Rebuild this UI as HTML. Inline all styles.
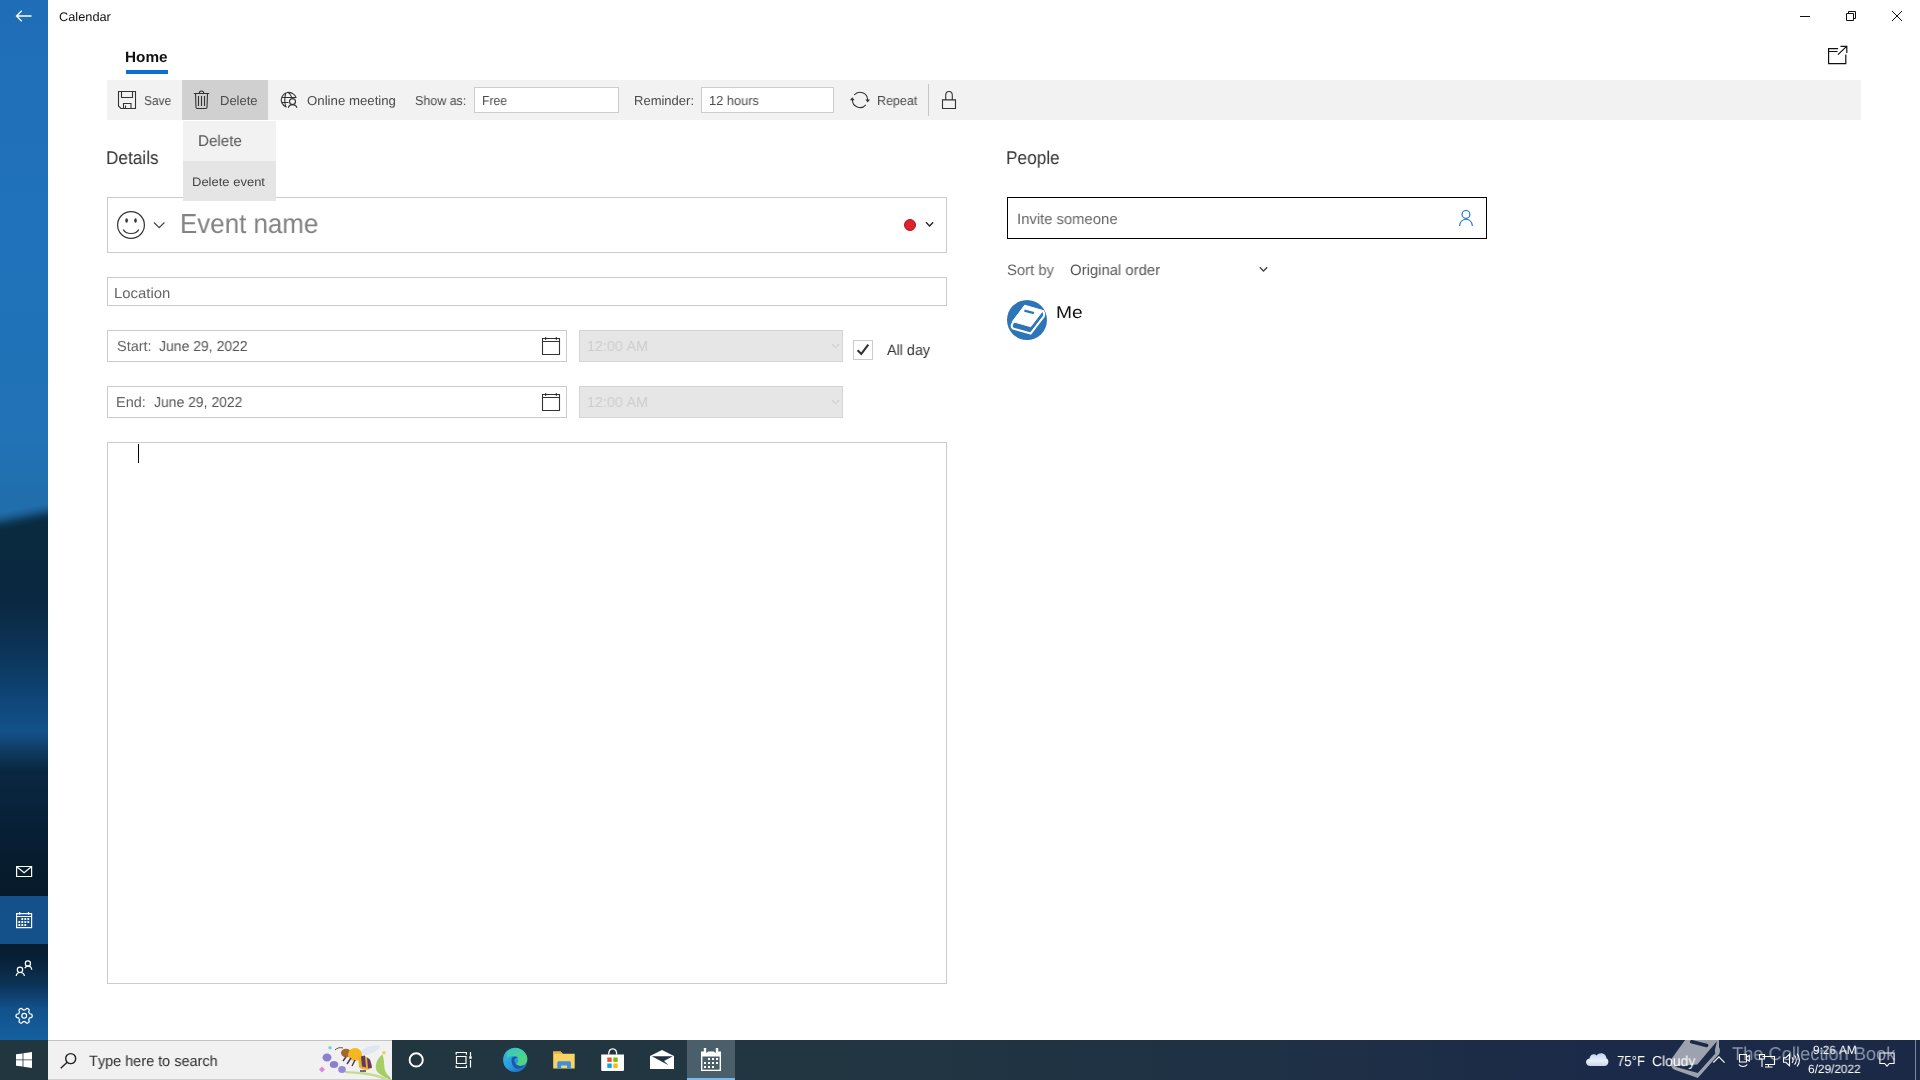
<!DOCTYPE html>
<html lang="en">
<head>
<meta charset="utf-8">
<title>Calendar</title>
<style>
*{box-sizing:border-box;margin:0;padding:0}
html,body{width:1920px;height:1080px;overflow:hidden;background:#fff}
body{position:relative;font-family:"Liberation Sans",sans-serif;color:#333}
.abs{position:absolute}
.t{position:absolute;white-space:nowrap;line-height:1;transform-origin:0 0;will-change:transform;text-rendering:geometricPrecision;font-kerning:none}
svg{position:absolute;overflow:visible}
#side{position:absolute;left:0;top:0;width:48px;height:1040px;
 background:linear-gradient(to bottom,#1f6db7 0px,#2073ba 250px,#2172b6 440px,#206eac 494px,#206eac 500px,#0a2a40 540px,#0a2a40 546px,#0a2840 600px,#0c3457 650px,#0e4272 690px,#13528a 732px,#0d3a60 752px,#09283f 770px,#08223a 810px,#071c2e 860px,#061a2a 900px,#061b2c 944px,#08223a 962px,#0c3356 985px,#12508a 1008px,#1560a0 1040px)}
#side .sel{position:absolute;left:0;top:896px;width:48px;height:48px;background:#14508a}
#tb{position:absolute;left:107px;top:80px;width:1754px;height:40px;background:#f2f2f2}
#delbtn{position:absolute;left:182px;top:80px;width:86px;height:40px;background:#d0d0d0}
.inp{position:absolute;background:#fff;border:1px solid #cdcdcd}
.box{position:absolute;background:#fff;border:1px solid #cbcbcb}
.dis{position:absolute;background:#e6e6e6;border:1px solid #d4d4d4}
#task{position:absolute;left:0;top:1040px;width:1920px;height:40px;background:linear-gradient(to right,#22363f 0,#213641 800px,#1f3145 1250px,#1b2a48 1600px,#1b2947 1920px)}
#search{position:absolute;left:48px;top:1040px;width:344px;height:40px;background:#f1f1f1;border-top:1px solid #c4c4c4;border-bottom:1px solid #cfcfcf}
</style>
</head>
<body>
<!-- SIDEBAR -->
<div id="side"><div class="sel"></div></div>

<!-- HOME TAB UNDERLINE -->
<div class="abs" style="left:126px;top:70px;width:42px;height:4px;background:#0b70d4"></div>

<!-- TOOLBAR -->
<div id="tb"></div>
<div id="delbtn"></div>
<div class="inp" style="left:474px;top:87px;width:145px;height:26px"></div>
<div class="inp" style="left:701px;top:87px;width:133px;height:26px"></div>
<div class="abs" style="left:928px;top:84px;width:1px;height:32px;background:#c6c6c6"></div>

<!-- DETAILS FORM -->
<div class="box" style="left:107px;top:197px;width:840px;height:56px"></div>
<div class="box" style="left:107px;top:277px;width:840px;height:29px"></div>
<div class="box" style="left:107px;top:330px;width:460px;height:32px"></div>
<div class="dis" style="left:579px;top:330px;width:264px;height:32px"></div>
<div class="box" style="left:853px;top:340px;width:20px;height:20px"></div>
<div class="box" style="left:107px;top:386px;width:460px;height:32px"></div>
<div class="dis" style="left:579px;top:386px;width:264px;height:32px"></div>
<div class="box" style="left:107px;top:442px;width:840px;height:542px"></div>
<div class="abs" style="left:138px;top:444px;width:1px;height:19px;background:#000"></div>

<!-- DROPDOWN -->
<div class="abs" style="left:183px;top:121px;width:93px;height:40px;background:#f2f2f2"></div>
<div class="abs" style="left:183px;top:161px;width:93px;height:40px;background:#e5e5e5"></div>

<!-- PEOPLE -->
<div class="abs" style="left:1007px;top:197px;width:480px;height:42px;border:1px solid #000;background:#fff"></div>

<!-- TASKBAR -->
<div id="task"></div>
<div id="search"></div>

<svg width="1920" height="1080" viewBox="0 0 1920 1080" style="left:0;top:0" fill="none" stroke-linecap="butt">
<!-- back arrow -->
<g stroke="#fff" stroke-width="1.3">
<path d="M16.5 16H31.5M21.7 10.8L16.5 16l5.2 5.2"/>
</g>
<!-- window controls -->
<g stroke="#111" stroke-width="1">
<path d="M1800 16.5h10"/>
<path d="M1846.5 13.5h7v7h-7zM1848.5 13.5v-2h7v7h-2"/>
<path d="M1892 11l10 10M1902 11l-10 10"/>
</g>
<!-- pop out -->
<g stroke="#111" stroke-width="1.2">
<path d="M1838 48.6h-9.4v15h17.2v-9.2M1828.6 51.5h9M1838 54.6l8.6-8.2M1840.5 46.4h6.3v6.6"/>
</g>
<!-- toolbar icons -->
<g stroke="#333" stroke-width="1.1">
<!-- save -->
<path d="M118.5 91.5h17v17h-14.5l-2.500-2.500zM121.500 91.500v6h11v-6M123.500 108.500v-5h7.500v5M125.500 105.500v3"/>
<!-- trash -->
<path d="M193.800 93.500h15.400M199.300 93.300c0-3 4.400-3 4.400 0M195.500 93.600l0.500 13.700c0 .8.500 1.200 1.300 1.200h8.400c.8 0 1.300-.4 1.300-1.200l.5-13.700M198.500 96v10M201.500 96v10M204.500 96v10"/>
<!-- globe + person -->
<path d="M293.500 94.100A7.500 7.500 0 1 0 286.600 107.100M296.200 98A7.500 7.500 0 0 0 293.500 94.100M281.900 97.500h14M281.800 102.500h6.800M285.800 93c-1.300 4.500-1.300 9.500 0 14M288.500 92.600c1.200 1 2.500 2.800 3.300 4.800"/>
<circle cx="292.500" cy="101.600" r="3"/>
<path d="M288.300 107.800c1-4.200 7.400-4.200 8.600 0"/>
<!-- repeat -->
<path d="M854.200 95A7.600 7.600 0 0 1 867.600 100M865.800 104.800A7.600 7.600 0 0 1 852.400 99.800"/>
<path d="M867.700 102.500l-2.300-3h4.600zM852.300 97.300l-2.300 3h4.600z" fill="#333" stroke="none"/>
<!-- lock -->
<path d="M942.500 99.900h13v8.600h-13zM945.700 99.900v-4.500c0-5.200 6.600-5.200 6.600 0v4.500"/>
</g>
<!-- smiley -->
<g stroke="#333" stroke-width="1.2">
<circle cx="131" cy="225" r="13.400"/>
<path d="M123.300 229.500c2.500 5.300 12.900 5.300 15.400 0"/>
</g>
<ellipse cx="126.600" cy="220.500" rx="1.300" ry="2.300" fill="#333"/>
<ellipse cx="135.500" cy="220.500" rx="1.300" ry="2.300" fill="#333"/>
<path d="M154 222.500l5.200 5.200 5.200-5.200" stroke="#444" stroke-width="1.2"/>
<!-- red dot -->
<circle cx="910" cy="225" r="5.500" fill="#e0222f" stroke="#9c1c26" stroke-width="1"/>
<path d="M926 222.300l3.600 3.700 3.600-3.700" stroke="#222" stroke-width="1.3"/>
<!-- calendar icons -->
<g stroke="#333" stroke-width="1.1">
<path d="M542.500 338.500h17v16h-17zM542.500 341.500h17M545.700 337v3M556.300 337v3"/>
<path d="M542.500 394.500h17v16h-17zM542.500 397.500h17M545.700 393v3M556.300 393v3"/>
</g>
<!-- time chevrons -->
<g stroke="#d2d2d2" stroke-width="1.2">
<path d="M832 344l3.600 3.700 3.600-3.700"/>
<path d="M832 400l3.600 3.700 3.600-3.700"/>
</g>
<!-- check -->
<path d="M857.600 350.300l3.700 3.700 7-9.300" stroke="#333" stroke-width="2.1"/>
<!-- invite person -->
<g stroke="#1e73c4" stroke-width="1.2">
<circle cx="1466" cy="214.400" r="3.900"/>
<path d="M1459.600 226c.8-9 12-9 12.800 0"/>
</g>
<!-- sort chevron -->
<path d="M1259.800 267.200l3.700 3.800 3.700-3.800" stroke="#444" stroke-width="1.4"/>
<!-- avatar -->
<circle cx="1027" cy="320" r="20" fill="#2e75b8"/>
<path d="M1024.700 305.200l18.300 5.300-12.300 16.200-18.300-5.200z" fill="#fff" stroke="#fff" stroke-width="1" stroke-linejoin="round"/>
<path d="M1024.400 310.600l9.600 2.600" stroke="#2e75b8" stroke-width="2.300"/>
<path d="M1013.200 322.400c-2 2-2 4.600-.2 6.200l17.600 5 13.200-17.200c.6-1.600.4-3.800-.8-5.400" stroke="#fff" stroke-width="2.100" stroke-linejoin="round" stroke-linecap="round"/>
</svg>


<svg width="1920" height="1080" viewBox="0 0 1920 1080" style="left:0;top:0" fill="none">
<defs><linearGradient id="sdg" gradientUnits="userSpaceOnUse" x1="0" y1="513" x2="3.300" y2="529.500"><stop offset="0" stop-color="#206eac"/><stop offset=".3" stop-color="#1b5d92"/><stop offset=".7" stop-color="#0e3858"/><stop offset="1" stop-color="#0a2a40"/></linearGradient></defs>
<rect x="0" y="494" width="48" height="52" fill="url(#sdg)"/>
<!-- sidebar icons -->
<g stroke="#fff" stroke-width="1.2">
<path d="M16.600 866.500h15v10h-15zM16.800 866.700l7.300 6 7.300-6"/>
<path d="M16.600 913.600h15v14h-15zM16.600 916.500h15M19.700 912v2.800M28.500 912v2.800"/>
<circle cx="27.900" cy="963.500" r="2.600"/>
<path d="M24.700 968.200c.8-1.400 2-2.100 3.200-2.100 2 0 3.700 1.500 3.900 3.700"/>
<circle cx="20" cy="969.800" r="2.700"/>
<path d="M16.200 976c.4-4.700 7.700-4.700 8.200 0"/>
<path d="M32.17 1015.80 L32.14 1016.33 L32.03 1016.84 L31.69 1017.31 L30.81 1017.60 L29.93 1017.78 L29.55 1018.06 L29.34 1018.38 L29.15 1018.71 L28.95 1019.04 L28.78 1019.39 L28.73 1019.86 L29.01 1020.71 L29.20 1021.62 L28.97 1022.15 L28.58 1022.50 L28.14 1022.79 L27.67 1023.03 L27.16 1023.19 L26.59 1023.13 L25.90 1022.51 L25.30 1021.84 L24.87 1021.65 L24.48 1021.63 L24.10 1021.63 L23.72 1021.63 L23.33 1021.65 L22.90 1021.84 L22.30 1022.51 L21.61 1023.13 L21.04 1023.19 L20.53 1023.03 L20.06 1022.79 L19.62 1022.50 L19.23 1022.15 L19.00 1021.62 L19.19 1020.71 L19.47 1019.86 L19.42 1019.39 L19.25 1019.04 L19.05 1018.71 L18.86 1018.38 L18.65 1018.06 L18.27 1017.78 L17.39 1017.60 L16.51 1017.31 L16.17 1016.84 L16.06 1016.33 L16.03 1015.80 L16.06 1015.27 L16.17 1014.76 L16.51 1014.29 L17.39 1014.00 L18.27 1013.82 L18.65 1013.54 L18.86 1013.22 L19.05 1012.89 L19.25 1012.56 L19.42 1012.21 L19.47 1011.74 L19.19 1010.89 L19.00 1009.98 L19.23 1009.45 L19.62 1009.10 L20.06 1008.81 L20.53 1008.57 L21.04 1008.41 L21.61 1008.47 L22.30 1009.09 L22.90 1009.76 L23.33 1009.95 L23.72 1009.97 L24.10 1009.97 L24.48 1009.97 L24.87 1009.95 L25.30 1009.76 L25.90 1009.09 L26.59 1008.47 L27.16 1008.41 L27.67 1008.57 L28.14 1008.81 L28.58 1009.10 L28.97 1009.45 L29.20 1009.98 L29.01 1010.89 L28.73 1011.74 L28.78 1012.21 L28.95 1012.56 L29.15 1012.89 L29.34 1013.22 L29.55 1013.54 L29.93 1013.82 L30.81 1014.00 L31.69 1014.29 L32.03 1014.76 L32.14 1015.27Z" stroke-linejoin="round" stroke-width="1.25"/>
<circle cx="24.200" cy="1015.800" r="2.400"/>
</g>
<g fill="#fff">
<path d="M21.4 918h1.800v2h-1.800zM24.4 918h1.800v2h-1.800zM27.4 918h1.800v2h-1.800zM18.4 921h1.800v2h-1.800zM21.4 921h1.800v2h-1.800zM24.4 921h1.800v2h-1.800zM27.4 921h1.800v2h-1.800zM18.4 924h1.800v2h-1.800zM21.4 924h1.800v2h-1.800zM24.4 924h1.800v2h-1.800z"/>
</g>
<!-- windows logo -->
<g fill="#fff">
<path d="M16 1054.300l6.600-.9v6.100h-6.600zM23.400 1053.300l8.600-1.300v7.500h-8.600zM16 1060.300h6.600v6.300l-6.600-.9zM23.400 1060.300h8.600v7.700l-8.600-1.300z"/>
</g>
<!-- search icon -->
<g stroke="#222" stroke-width="1.400">
<circle cx="70.700" cy="1058.600" r="5"/>
<path d="M67.200 1062.200l-6.500 6"/>
</g>
<!-- bee doodle -->
<g>
<path d="M382.500 1054.500c-4.500 3-7.500 9-6.500 14.500 1 4 5.500 6 9 8.500l5.500 2.500v-2.500c-3-2.500-5.500-5-6-9.500-.5-4.500-.5-9.500-2-13.500z" fill="#a5cf63"/>
<path d="M345 1070.800c13 1.200 30 1 42 8.200l-3 .8c-11-5.200-26-5.600-39-6.800z" fill="#c3dc8e"/>
<ellipse cx="327" cy="1057.500" rx="4.500" ry="4" fill="#8c7fd0"/>
<ellipse cx="334" cy="1064.500" rx="4.200" ry="3.600" fill="#8c7fd0"/>
<ellipse cx="342" cy="1069.500" rx="3.800" ry="3.400" fill="#9488d6"/>
<path d="M319 1069.500l3-3 3 3-3 3z" fill="#e483e6"/>
<circle cx="330" cy="1047.800" r="1.700" fill="#6fd3e2"/>
<circle cx="384" cy="1052.800" r="1.800" fill="#ead15e"/>
<path d="M361 1051c6-5 16-7 19-5 1 3-8 8-17 10z" fill="#dfe6f2"/>
<ellipse cx="346" cy="1053" rx="5" ry="4.200" fill="#a5662c"/>
<ellipse cx="355" cy="1054.500" rx="7" ry="6.500" fill="#f4b720"/>
<path d="M358 1056c8-2 14 4 14 12-4 3-10 2-13-1z" fill="#f0b024"/>
<path d="M361 1056.500l4-1 1 12-4-1zM367 1057.500l3 2 2 8-4 1z" fill="#5b3a6b"/>
<path d="M343 1061l3-4M347 1064l4-6M352 1066l3-6M360 1071h6" stroke="#4a355a" stroke-width="1.400"/>
<path d="M335 1050c2-2 5-3 8-2" stroke="#6b4a2a" stroke-width="1"/>
</g>
<!-- cortana -->
<circle cx="416.200" cy="1059.900" r="6.600" stroke="#fff" stroke-width="1.900"/>
<!-- task view -->
<g stroke="#fff" stroke-width="1.200">
<path d="M456.500 1056.500h9.500v7h-9.500zM456.200 1054.800v-2.300h10.200v2.300M456.200 1065.200v2.300h10.200v-2.300M470.500 1052v4M470.500 1060v7.500"/>
</g>
<path d="M469.300 1056.200h2.400v2.600h-2.400z" fill="#fff"/>
<!-- edge -->
<defs>
<linearGradient id="eg1" x1="0" y1="0" x2="1" y2="1"><stop offset="0" stop-color="#35c1dd"/><stop offset=".5" stop-color="#2a9be0"/><stop offset="1" stop-color="#1b5fb4"/></linearGradient>
<linearGradient id="eg2" x1="0" y1="0" x2="1" y2="1"><stop offset="0" stop-color="#36c6c8"/><stop offset="1" stop-color="#58d96a"/></linearGradient>
</defs>
<circle cx="515.200" cy="1059.900" r="12.100" fill="url(#eg1)"/>
<path d="M507 1051.500c6-5.500 17-4.500 20 5 1.500 6-2.500 9.500-8 9.500-3.500 0-3-2.500-1.500-3.500 2-2.500-.5-6.500-4.500-6.500-3 0-5 1.500-6 3z" fill="url(#eg2)"/>
<path d="M511.500 1059.500c0-3 4.500-4 6.500-1.500-2.500-.5-4 1-3.500 3.500 1 4 5.500 5.500 9.500 3.500-3 6-12.500 5.500-12.500-5.500z" fill="#1a58a8"/>
<!-- folder -->
<path d="M553.200 1051.500h7.500l2 2.200h12v14.800h-21.500z" fill="#f9d463"/>
<path d="M553.200 1051.500h7.500l2 2.200h-9.500z" fill="#e5b63c"/>
<path d="M557.300 1068.600v-5.800c0-1 .6-1.600 1.600-1.600h10.400c1 0 1.600.6 1.600 1.600v5.800h-3.900v-3.200h-5.800v3.200z" fill="#3f8fe0"/>
<!-- store -->
<path d="M601.200 1054.400h22.800v15c0 1-.6 1.600-1.600 1.600h-19.600c-1 0-1.600-.6-1.600-1.600z" fill="#fff"/>
<path d="M608.700 1054.500c0-7.500 8-7.500 8 0" stroke="#fff" stroke-width="1.300"/>
<path d="M607.300 1057.500h4.400v4.400h-4.400z" fill="#f25022"/><path d="M613.300 1057.500h4.400v4.400h-4.400z" fill="#7fba00"/>
<path d="M607.300 1063.500h4.400v4.400h-4.400z" fill="#00a4ef"/><path d="M613.300 1063.500h4.400v4.400h-4.400z" fill="#ffb900"/>
<!-- mail app -->
<path d="M650 1056l12-6.100 12 6.100v13h-24z" fill="#fff"/>
<path d="M651.800 1056.300h21l-8.800 4.700 4.600 4.300z" fill="#203440"/>
<!-- calendar app -->
<rect x="687" y="1040" width="48" height="40" fill="#4b5f6a"/>
<rect x="687" y="1078" width="48" height="2" fill="#76b9ed"/>
<path d="M701 1051.500h2.800v-3.500h2.400v5l2.200-1.500h5.200l2.200 1.500v-5h2.400v3.500h2.800v19.500h-20z" fill="#fff"/>
<path d="M702.400 1056.500h17.200v13.200h-17.200z" fill="#4b5f6a"/>
<g fill="#fff"><path d="M708 1058h2v2h-2zM712 1058h2v2h-2zM716 1058h2v2h-2zM704 1062h2v2h-2zM708 1062h2v2h-2zM712 1062h2v2h-2zM716 1062h2v2h-2zM704 1066h2v2h-2zM708 1066h2v2h-2zM712 1066h2v2h-2z"/></g>
</svg>

<div class="t" style="left:1731.60px;top:1045.09px;font-size:18.5px;color:#8b95ab;transform:scaleX(0.9868);">The Collection Book</div>
<svg width="1920" height="1080" viewBox="0 0 1920 1080" style="left:0;top:0" fill="none">
<!-- weather cloud -->
<defs>
<linearGradient id="cl" x1="0" y1="0" x2="0" y2="1"><stop offset="0" stop-color="#bfd2f0"/><stop offset=".6" stop-color="#e9f0fa"/><stop offset="1" stop-color="#c9d4e6"/></linearGradient>
<clipPath id="tbclip"><rect x="0" y="1040" width="1920" height="40"/></clipPath>
</defs>
<path d="M1590.500 1066c-5.500 0-6-7 -1-7.500 0.500-4 5-5.500 7-3 3.500-4.500 10-2 10 3 3 1 2.500 7.500-2 7.500z" fill="url(#cl)"/>
<!-- watermark book -->
<g clip-path="url(#tbclip)">
<path d="M1688 1036l31 .5v10.500c1.200 2 1.200 5 .3 6.700l-21.500 24.200-23.800-8.400c-3.200-1.800-3.800-5.500-3-10z" fill="#9ca2ae"/>
<path d="M1674.600 1066l22.700-1.400 19.600-23.400-1.600 7.400c-.5 1.500-.5 3.500 0 5l-17.500 19.500-21.500-6.200z" fill="#1c2b48"/>
<path d="M1691.800 1041.800l14.800 3.600" stroke="#1c2b48" stroke-width="3.600" stroke-linecap="round"/>
</g>
<!-- tray chevron -->
<path d="M1713.200 1062.600l5.700-5.700 5.700 5.700" stroke="#fff" stroke-width="1.200"/>
<!-- meet now -->
<g stroke="#fff" stroke-width="1.100">
<path d="M1739.500 1054.500h7v7.500h-7zM1746.500 1057l2.800-1.500v5.500l-2.800-1.500M1738.800 1064.500c2 2.600 6.500 2.600 8.500 0"/>
</g>
<!-- network -->
<g stroke="#fff" stroke-width="1.100">
<path d="M1762.500 1056.500h12v8h-9.500M1768.500 1064.500v2.500M1765 1067h7.500M1759.500 1054.500h5v4.500h-5zM1762 1059v8"/>
</g>
<!-- volume -->
<g stroke="#fff" stroke-width="1.100">
<path d="M1783.500 1057.700h2.300l3.700-3.400v11.400l-3.700-3.400h-2.300zM1792 1057.300c1.200 1.500 1.200 4 0 5.500M1794.500 1055.400c2.300 2.700 2.300 6.600 0 9.300M1797 1053.600c3.200 3.700 3.200 9.200 0 12.900"/>
</g>
<!-- notification -->
<path d="M1879.900 1053h14.200v10.500h-4.700l-2.400 2.600-2.400-2.600h-4.700z" stroke="#fff" stroke-width="1.100"/>
<!-- show desktop -->
<path d="M1915.500 1040v40" stroke="#7f8899" stroke-width="1"/>
</svg>


<div class="t" style="left:59.36px;top:11.17px;font-size:12.5px;color:#111;transform:scaleX(1.0220);">Calendar</div>
<div class="t" style="left:124.99px;top:50.05px;font-size:15px;color:#111;transform:scaleX(1.0207);font-weight:bold;">Home</div>
<div class="t" style="left:144.47px;top:94.00px;font-size:13px;color:#4a4a4a;transform:scaleX(0.9132);">Save</div>
<div class="t" style="left:219.53px;top:94.00px;font-size:13px;color:#4a4a4a;transform:scaleX(0.9991);">Delete</div>
<div class="t" style="left:306.88px;top:94.00px;font-size:13px;color:#4a4a4a;transform:scaleX(1.0175);">Online meeting</div>
<div class="t" style="left:415.44px;top:94.00px;font-size:13px;color:#4a4a4a;transform:scaleX(0.9594);">Show as:</div>
<div class="t" style="left:481.50px;top:94.00px;font-size:13px;color:#4a4a4a;transform:scaleX(0.9366);">Free</div>
<div class="t" style="left:633.93px;top:94.00px;font-size:13px;color:#4a4a4a;transform:scaleX(1.0005);">Reminder:</div>
<div class="t" style="left:709.02px;top:94.00px;font-size:13px;color:#4a4a4a;transform:scaleX(0.9870);">12 hours</div>
<div class="t" style="left:877.47px;top:94.00px;font-size:13px;color:#4a4a4a;transform:scaleX(0.9628);">Repeat</div>
<div class="t" style="left:198.36px;top:134.03px;font-size:15.5px;color:#555;transform:scaleX(0.9780);">Delete</div>
<div class="t" style="left:192.23px;top:176.07px;font-size:12.2px;color:#444;transform:scaleX(1.0665);">Delete event</div>
<div class="t" style="left:105.99px;top:149.09px;font-size:18.5px;color:#333;transform:scaleX(0.9306);">Details</div>
<div class="t" style="left:1006.09px;top:149.19px;font-size:18.5px;color:#333;transform:scaleX(0.9317);">People</div>
<div class="t" style="left:179.88px;top:210.22px;font-size:27.5px;color:#828282;transform:scaleX(0.9422);">Event name</div>
<div class="t" style="left:114.38px;top:287.23px;font-size:14.5px;color:#666;transform:scaleX(1.0274);">Location</div>
<div class="t" style="left:116.85px;top:340.08px;font-size:14.5px;color:#666;transform:scaleX(0.9944);">Start:</div>
<div class="t" style="left:158.54px;top:340.08px;font-size:14.5px;color:#555;transform:scaleX(0.9646);">June 29, 2022</div>
<div class="t" style="left:116.33px;top:396.08px;font-size:14.5px;color:#666;transform:scaleX(0.9847);">End:</div>
<div class="t" style="left:153.79px;top:396.08px;font-size:14.5px;color:#555;transform:scaleX(0.9618);">June 29, 2022</div>
<div class="t" style="left:587.42px;top:340.08px;font-size:14.5px;color:#cdcdcd;transform:scaleX(0.9835);">12:00 AM</div>
<div class="t" style="left:587.42px;top:396.08px;font-size:14.5px;color:#cdcdcd;transform:scaleX(0.9835);">12:00 AM</div>
<div class="t" style="left:886.97px;top:343.05px;font-size:15px;color:#333;transform:scaleX(0.9565);">All day</div>
<div class="t" style="left:1017.14px;top:212.05px;font-size:15px;color:#666;transform:scaleX(0.9881);">Invite someone</div>
<div class="t" style="left:1006.83px;top:263.05px;font-size:15px;color:#666;transform:scaleX(0.9879);">Sort by</div>
<div class="t" style="left:1069.90px;top:263.05px;font-size:15px;color:#555;transform:scaleX(0.9914);">Original order</div>
<div class="t" style="left:1056.18px;top:304.11px;font-size:17px;color:#111;transform:scaleX(1.1294);">Me</div>
<div class="t" style="left:88.68px;top:1054.05px;font-size:15px;color:#2d2d2d;transform:scaleX(0.9644);">Type here to search</div>
<div class="t" style="left:1616.63px;top:1055.03px;font-size:14.5px;color:#fff;transform:scaleX(0.9062);">75°F</div>
<div class="t" style="left:1652.30px;top:1055.03px;font-size:14.5px;color:#fff;transform:scaleX(0.9598);">Cloudy</div>
<div class="t" style="left:1813.06px;top:1044.04px;font-size:12px;color:#fff;transform:scaleX(0.9743);">9:26 AM</div>
<div class="t" style="left:1808.41px;top:1063.19px;font-size:12px;color:#fff;transform:scaleX(0.9868);">6/29/2022</div>

</body>
</html>
